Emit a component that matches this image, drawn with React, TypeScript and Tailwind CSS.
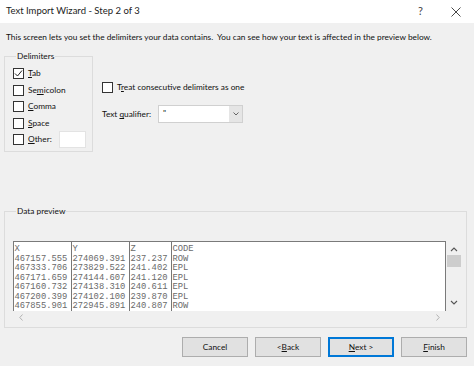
import React from "react";

const ui = { fontFamily: "Lato, 'Noto Sans', Arial, sans-serif" };
const mono = { fontFamily: "'Liberation Mono', 'Courier New', monospace" };

function Box({ checked }: { checked?: boolean }) {
  return (
    <div className="w-[11px] h-[11px] border border-[#333333] bg-white flex items-center justify-center shrink-0">
      {checked && (
        <svg width="9" height="9" viewBox="0 0 9 9">
          <polyline points="1,4.5 3.5,7 8,1.5" fill="none" stroke="#222" strokeWidth="1" />
        </svg>
      )}
    </div>
  );
}

function U({ children }: { children: React.ReactNode }) {
  return <span className="underline underline-offset-1">{children}</span>;
}

function Check({ checked, children }: { checked?: boolean; children: React.ReactNode }) {
  return (
    <div className="flex items-center gap-[4px] h-[16.5px]">
      <Box checked={checked} />
      <span>{children}</span>
    </div>
  );
}

const cols: string[][] = [
  ["X", "467157.555", "467333.706", "467171.659", "467160.732", "467200.399", "467855.901"],
  ["Y", "274069.391", "273829.522", "274144.607", "274138.310", "274102.100", "272945.891"],
  ["Z", "237.237", "241.402", "241.120", "240.611", "239.870", "240.807"],
  ["CODE", "ROW", "EPL", "EPL", "EPL", "EPL", "ROW"],
];
const colW = ["w-[58px]", "w-[58px]", "w-[42px]", "flex-1"];

function Btn({ children, primary }: { children: React.ReactNode; primary?: boolean }) {
  return (
    <div
      className={
        "w-[66px] h-[20px] flex items-center justify-center bg-[#e1e1e1] border " +
        (primary ? "border-[#0078d7] shadow-[inset_0_0_0_1px_#0078d7]" : "border-[#adadad]")
      }
    >
      {children}
    </div>
  );
}

export default function App() {
  return (
    <div className="w-[474px] h-[366px] flex flex-col bg-[#f0f0f0] text-[8.3px] text-[#111]" style={ui}>
      <div className="h-[23px] bg-white flex items-center justify-between pl-[6px] pr-[13px] shrink-0">
        <span className="text-[9.5px] text-[#222]">Text Import Wizard - Step 2 of 3</span>
        <div className="flex items-center gap-[28px]">
          <span className="text-[11px] text-[#444]">?</span>
          <svg width="10" height="10" viewBox="0 0 10 10">
            <path d="M0.5 0.5 L9.5 9.5 M9.5 0.5 L0.5 9.5" stroke="#333" strokeWidth="0.9" />
          </svg>
        </div>
      </div>
      <div className="flex-1 flex flex-col pl-[4px] pr-[7px]">
        <div className="pl-[2px] pt-[8px] h-[27px]">
          This screen lets you set the delimiters your data contains.&nbsp; You can see how your text is affected in the preview below.
        </div>
        <div className="flex">
          <fieldset className="w-[89px] h-[102px] border border-[#dcdcdc] pl-[8px] pt-[3px]">
            <legend className="ml-[3px] px-[1px]">Delimiters</legend>
            <Check checked>
              <U>T</U>ab
            </Check>
            <Check>
              Se<U>m</U>icolon
            </Check>
            <Check>
              <U>C</U>omma
            </Check>
            <Check>
              <U>S</U>pace
            </Check>
            <div className="flex items-center h-[16.5px]">
              <div className="flex items-center gap-[4px] w-[46px]">
                <Box />
                <span>
                  <U>O</U>ther:
                </span>
              </div>
              <div className="w-[27px] h-[17px] bg-white border border-[#e3e3e3]" />
            </div>
          </fieldset>
          <div className="pl-[9px] pt-[31px] flex flex-col">
            <div className="flex items-center gap-[4px]">
              <Box />
              <span>
                T<U>r</U>eat consecutive delimiters as one
              </span>
            </div>
            <div className="flex items-center mt-[12px]">
              <span className="w-[56px]">
                Text <U>q</U>ualifier:
              </span>
              <div className="w-[85px] h-[18px] bg-white border border-[#d0d0d0] flex items-stretch">
                <span className="flex-1 pl-[4px] leading-[15px]">"</span>
                <div className="w-[13px] bg-[#e5e5e5] flex items-center justify-center">
                  <svg width="6" height="4" viewBox="0 0 6 4">
                    <polyline points="0.5,0.5 3,3 5.5,0.5" fill="none" stroke="#555" strokeWidth="0.9" />
                  </svg>
                </div>
              </div>
            </div>
          </div>
        </div>
        <div className="h-[53px]" />
        <fieldset className="h-[123px] border border-[#dcdcdc] pl-[8px] pr-[4px] pt-[24px]">
          <legend className="ml-[3px] px-[1px]">Data preview</legend>
          <div className="flex flex-col">
            <div className="flex h-[70px]">
              <div className="flex-1 bg-white border-l border-t border-r border-[#7a7a7a] flex pt-[2px] text-[8.8px] leading-[9.5px] text-[#6a6a6a]" style={mono}>
                {cols.map((c, i) => (
                  <div key={i} className={colW[i] + " " + (i < 3 ? "border-r border-[#777]" : "") + " -mt-[2px] pt-[3px] pl-[0.5px]"}>
                    {c.map((v, j) => (
                      <div key={j}>{v}</div>
                    ))}
                  </div>
                ))}
              </div>
              <div className="w-[16px] flex flex-col items-center">
                <svg className="mt-[6px]" width="8" height="5" viewBox="0 0 8 5">
                  <polyline points="1,4 4,1 7,4" fill="none" stroke="#555" strokeWidth="1.1" />
                </svg>
                <div className="mt-[3px] w-[14px] h-[12px] bg-[#cdcdcd]" />
                <div className="flex-1" />
                <svg className="mb-[6px]" width="8" height="5" viewBox="0 0 8 5">
                  <polyline points="1,1 4,4 7,1" fill="none" stroke="#555" strokeWidth="1.1" />
                </svg>
              </div>
            </div>
            <div className="h-[13px] flex items-center justify-between pl-[6px] pr-[22px] text-[#a0a0a0]">
              <svg width="4" height="7" viewBox="0 0 4 7">
                <polyline points="3.5,0.5 0.8,3.5 3.5,6.5" fill="none" stroke="#aaa" strokeWidth="0.9" />
              </svg>
              <svg width="4" height="7" viewBox="0 0 4 7">
                <polyline points="0.5,0.5 3.2,3.5 0.5,6.5" fill="none" stroke="#aaa" strokeWidth="0.9" />
              </svg>
            </div>
          </div>
        </fieldset>
        <div className="flex justify-end gap-[7px] pt-[9px] pr-[0px]">
          <Btn>Cancel</Btn>
          <Btn>
            &lt; <U>B</U>ack
          </Btn>
          <Btn primary>
            <U>N</U>ext &gt;
          </Btn>
          <Btn>
            <U>F</U>inish
          </Btn>
        </div>
      </div>
    </div>
  );
}
